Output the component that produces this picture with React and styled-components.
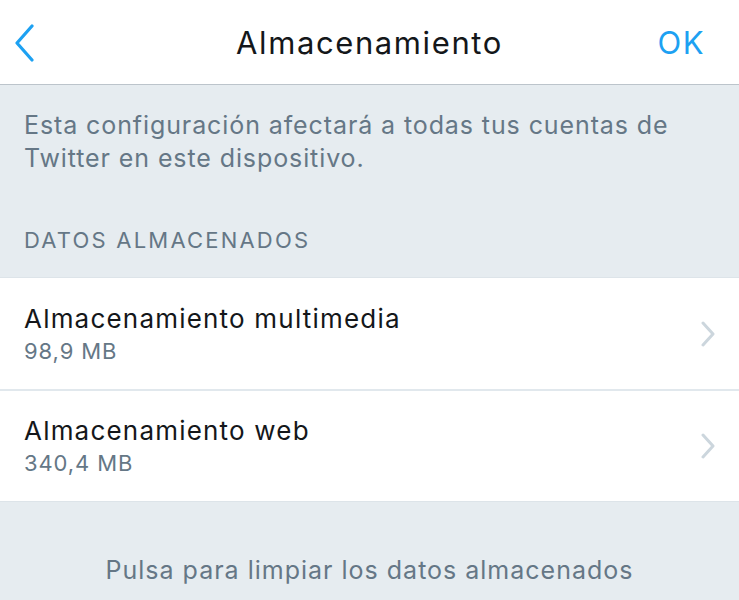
import React from "react";
import styled, { createGlobalStyle } from "styled-components";

const GlobalStyle = createGlobalStyle`
  html, body {
    margin: 0;
    padding: 0;
    background: #e6ecf0;
    font-family: Inter, Roboto, "Liberation Sans", sans-serif;
  }
`;

const items = [
  { title: "Almacenamiento multimedia", size: "98,9 MB" },
  { title: "Almacenamiento web", size: "340,4 MB" },
];

const App = () => {
  return (
    <Screen>
      <GlobalStyle />
      <NavBar>
        <BackButton aria-label="Atrás">
          <svg width="22" height="38" viewBox="0 0 22 38">
            <path
              d="M18 2 L3 19 L18 36"
              fill="none"
              stroke="#1da1f2"
              strokeWidth="3.2"
              strokeLinecap="round"
              strokeLinejoin="round"
            />
          </svg>
        </BackButton>
        <Title>Almacenamiento</Title>
        <DoneButton>OK</DoneButton>
      </NavBar>

      <Note>
        Esta configuración afectará a todas tus cuentas de Twitter en este
        dispositivo.
      </Note>
      <SectionHeader>DATOS ALMACENADOS</SectionHeader>

      <List>
        {items.map((item) => (
          <Row key={item.title}>
            <RowText>
              <RowTitle>{item.title}</RowTitle>
              <RowSub>{item.size}</RowSub>
            </RowText>
            <svg width="14" height="26" viewBox="0 0 14 26">
              <path
                d="M2 2 L12 13 L2 24"
                fill="none"
                stroke="#ccd6dd"
                strokeWidth="3"
                strokeLinecap="round"
                strokeLinejoin="round"
              />
            </svg>
          </Row>
        ))}
      </List>

      <ClearAction>Pulsa para limpiar los datos almacenados</ClearAction>
    </Screen>
  );
};

export default App;

const Screen = styled.div`
  width: 739px;
  height: 600px;
  overflow: hidden;
  background: #e6ecf0;
`;

const NavBar = styled.div`
  height: 84px;
  background: #fff;
  border-bottom: 1px solid #bcc4cb;
  display: flex;
  align-items: center;
  justify-content: space-between;
  padding: 0 34px 0 14px;
  position: relative;
`;

const BackButton = styled.button`
  border: 0;
  background: none;
  padding: 0;
  display: flex;
  margin-top: 1px;
`;

const Title = styled.h1`
  position: absolute;
  left: 0;
  right: 0;
  text-align: center;
  margin: 0;
  font-size: 31px;
  font-weight: 400;
  letter-spacing: 1.6px;
  color: #14171a;
  pointer-events: none;
`;

const DoneButton = styled.button`
  border: 0;
  background: none;
  padding: 0;
  font-family: inherit;
  font-size: 31px;
  letter-spacing: 1.5px;
  color: #1da1f2;
`;

const Note = styled.p`
  margin: 0;
  padding: 24px 40px 0 24px;
  font-size: 25px;
  line-height: 33px;
  letter-spacing: 0.9px;
  color: #657786;
`;

const SectionHeader = styled.div`
  padding: 52px 24px 24px;
  font-size: 22px;
  letter-spacing: 2.2px;
  color: #657786;
`;

const List = styled.div`
  background: #fff;
  border-top: 1px solid #dde4e9;
  border-bottom: 1px solid #dde4e9;
`;

const Row = styled.div`
  height: 111px;
  display: flex;
  align-items: center;
  justify-content: space-between;
  padding: 0 24px;
  & + & {
    border-top: 2px solid #e1e8ed;
    height: 110px;
  }
`;

const RowText = styled.div`
  display: flex;
  flex-direction: column;
  gap: 2px;
`;

const RowTitle = styled.div`
  font-size: 26px;
  letter-spacing: 1.2px;
  color: #14171a;
  line-height: 32px;
`;

const RowSub = styled.div`
  font-size: 22px;
  letter-spacing: 0.9px;
  color: #657786;
  line-height: 28px;
`;

const ClearAction = styled.div`
  padding-top: 53px;
  text-align: center;
  font-size: 25px;
  letter-spacing: 1px;
  color: #657786;
`;
